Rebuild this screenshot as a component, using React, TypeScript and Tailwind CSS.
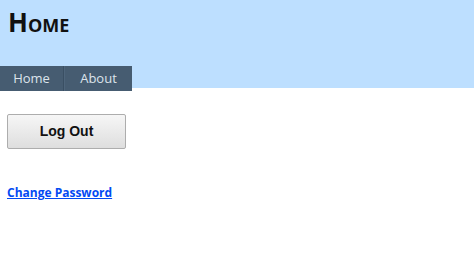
export default function App() {
  return (
    <div className="h-[278px] w-[474px] bg-white font-['Open_Sans',sans-serif]">
      <header className="relative h-[88px] bg-[#bddfff]">
        <h1 className="pl-[8px] pt-[6px] text-[26px] font-bold leading-[32px] text-[#111] [font-variant:small-caps]">
          Home
        </h1>
        <nav className="absolute left-0 top-[66px] flex h-[25px] w-[132px] bg-[#465c71]">
          <a className="flex w-[64px] items-center justify-center border-r border-[#3a4f63] text-[13px] text-[#dde4ec]">
            Home
          </a>
          <a className="flex flex-1 items-center justify-center border-l border-[#4e657b] text-[13px] text-[#dde4ec]">
            About
          </a>
        </nav>
      </header>
      <div className="pl-[7px] pt-[26px]">
        <button className="h-[35px] w-[119px] rounded-[2px] border border-[#adadad] bg-gradient-to-b from-[#f6f6f6] to-[#dedede] font-['Liberation_Sans',sans-serif] text-[14px] font-bold text-[#111]">
          Log Out
        </button>
        <div className="pt-[34px] leading-[16px]">
          <a className="text-[12px] font-bold text-[#034af3] underline">Change Password</a>
        </div>
      </div>
    </div>
  );
}
